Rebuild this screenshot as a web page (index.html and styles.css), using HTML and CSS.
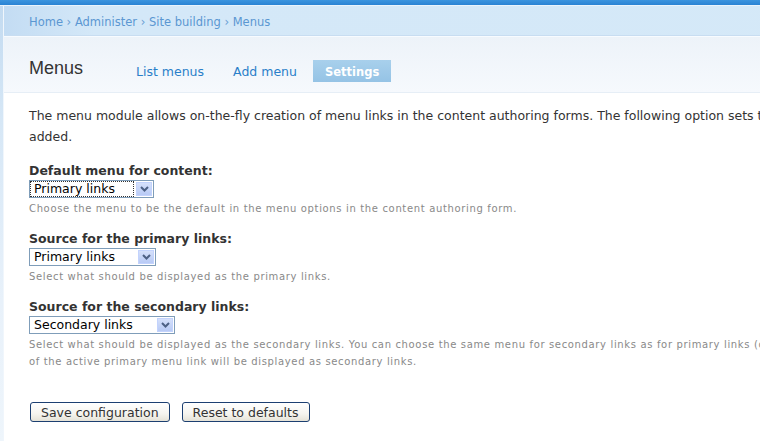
FILE: index.html
```html
<!DOCTYPE html>
<html>
<head>
<meta charset="utf-8">
<link rel="stylesheet" href="styles.css">
</head>
<body>
<div class="page">
  <div class="topbar"></div>
  <div class="frame">
    <div class="breadcrumb">
      <a href="#">Home</a> › <a href="#">Administer</a> › <a href="#">Site building</a> › <a href="#">Menus</a>
    </div>
    <div class="header">
      <h1 class="title">Menus</h1>
      <ul class="tabs">
        <li><a href="#">List menus</a></li>
        <li><a href="#">Add menu</a></li>
        <li class="active"><a href="#">Settings</a></li>
      </ul>
    </div>
    <div class="content">
      <p class="intro">The menu module allows on-the-fly creation of menu links in the content authoring forms. The following option sets the default menu in which a new link will be added.</p>

      <div class="item">
        <label class="label">Default menu for content:</label>
        <div class="select w1">
          <span class="value focused">Primary links</span>
          <span class="arrow"><svg width="9" height="6" viewBox="0 0 9 6"><path d="M1 1 L4.5 4.5 L8 1" fill="none" stroke="#4d6185" stroke-width="2"/></svg></span>
        </div>
        <div class="desc">Choose the menu to be the default in the menu options in the content authoring form.</div>
      </div>

      <div class="item">
        <label class="label">Source for the primary links:</label>
        <div class="select w2">
          <span class="value">Primary links</span>
          <span class="arrow"><svg width="9" height="6" viewBox="0 0 9 6"><path d="M1 1 L4.5 4.5 L8 1" fill="none" stroke="#4d6185" stroke-width="2"/></svg></span>
        </div>
        <div class="desc">Select what should be displayed as the primary links.</div>
      </div>

      <div class="item">
        <label class="label">Source for the secondary links:</label>
        <div class="select w3">
          <span class="value">Secondary links</span>
          <span class="arrow"><svg width="9" height="6" viewBox="0 0 9 6"><path d="M1 1 L4.5 4.5 L8 1" fill="none" stroke="#4d6185" stroke-width="2"/></svg></span>
        </div>
        <div class="desc nowrap">Select what should be displayed as the secondary links. You can choose the same menu for secondary links as for primary links (currently Primary links). If you do this, the children<br>of the active primary menu link will be displayed as secondary links.</div>
      </div>

      <div class="buttons">
        <button class="btn">Save configuration</button>
        <button class="btn">Reset to defaults</button>
      </div>
    </div>
  </div>
</div>
</body>
</html>
```

FILE: styles.css
```css
html, body {
  margin: 0;
  padding: 0;
  background: #ffffff;
  overflow: hidden;
}
body {
  width: 760px;
  height: 441px;
  font-family: "DejaVu Sans", Verdana, sans-serif;
}
.page {
  width: 1300px;
  height: 441px;
  background: linear-gradient(to bottom, #c2daf0 0px, #d6e7f6 120px, #e8f1fa 300px, #eef5fb 441px);
}
.topbar {
  height: 5px;
  background: linear-gradient(to bottom, #3b94df, #2a83d3);
  border-bottom: 1px solid #e9f3fc;
}
.frame {
  margin-left: 3px;
  border-left: 1px solid #f0f6fc;
  background: #ffffff;
  height: 435px;
}
.breadcrumb {
  height: 30px;
  padding-left: 25px;
  box-sizing: border-box;
  padding-top: 9px;
  font-size: 11.5px;
  color: #6a9fd4;
  background: linear-gradient(to right, #c3dcf3 0px, #d4e8f8 90px, #d5e9f8 100%);
  border-bottom: 1px solid #c8ddf1;
}
.breadcrumb a {
  color: #5b97d2;
  text-decoration: none;
}
.header {
  height: 57px;
  box-sizing: border-box;
  border-top: 1px solid #f7fbff;
  border-bottom: 1px solid #e6eef6;
  background: linear-gradient(to bottom, #edf3f9, #f6f9fd);
  display: flex;
  align-items: flex-start;
  padding-left: 25px;
}
.title {
  margin: 0;
  padding-top: 21px;
  font-family: "Liberation Sans", Arial, sans-serif;
  font-weight: normal;
  font-size: 18px;
  color: #333333;
  width: 107px;
}
.tabs {
  list-style: none;
  margin: 0;
  padding: 0;
  display: flex;
  margin-top: 23px;
}
.tabs li a {
  display: block;
  height: 22px;
  box-sizing: border-box;
  padding: 4px 12px 0;
  font-size: 12.5px;
  color: #2a7fc9;
  text-decoration: none;
}
.tabs li:first-child a { padding-left: 0; margin-right: 5px; }
.tabs li:nth-child(2) a { margin-right: 4px; }
.tabs li.active a {
  background: linear-gradient(to bottom, #a8d0ec, #95c3e5);
  color: #ffffff;
  font-weight: bold;
  font-size: 11.5px;
  padding: 5px 12px 0;
}
.content {
  padding: 12px 25px 0;
  color: #333333;
}
.intro {
  margin: 0 0 15px;
  font-size: 12.5px;
  line-height: 21px;
  width: 1050px;
}
.item {
  margin-bottom: 13px;
}
.label {
  display: block;
  font-weight: bold;
  font-size: 12.5px;
  line-height: 17px;
  color: #333333;
  margin-bottom: 1px;
}
.select {
  display: flex;
  align-items: stretch;
  height: 18px;
  box-sizing: border-box;
  border: 1px solid #7f9db9;
  background: #ffffff;
}
.select.w1 { width: 125px; }
.select.w2 { width: 127px; }
.select.w3 { width: 146px; }
.select .value {
  flex: 1;
  font-family: "DejaVu Sans", Verdana, sans-serif;
  font-size: 12.5px;
  line-height: 14px;
  padding: 0 3px;
  color: #000000;
  border: 1px dotted transparent;
  margin: 0 1px 0 0;
  white-space: nowrap;
}
.select .value.focused {
  border: 1px dotted #333333;
}
.select .arrow {
  width: 16px;
  margin: 1px;
  display: flex;
  align-items: center;
  justify-content: center;
  background: linear-gradient(to bottom, #d5e0fa, #b8caf5);
  border: 1px solid #c3d3fd;
  box-sizing: border-box;
}
.desc {
  font-size: 10px;
  line-height: 17px;
  color: #898989;
  letter-spacing: 0.65px;
  width: 1200px;
  margin-top: 2px;
}
.desc.nowrap {
  white-space: nowrap;
}
.buttons {
  padding-top: 19px;
  display: flex;
  gap: 12px;
  margin-left: 1px;
}
.btn {
  font-family: "DejaVu Sans", Verdana, sans-serif;
  font-size: 12.5px;
  color: #333333;
  height: 20px;
  padding: 0 10px;
  border: 1px solid #1c3f71;
  border-radius: 3px;
  background: linear-gradient(to bottom, #ffffff 0%, #f5f4ef 60%, #e5e2d7 100%);
}
```
